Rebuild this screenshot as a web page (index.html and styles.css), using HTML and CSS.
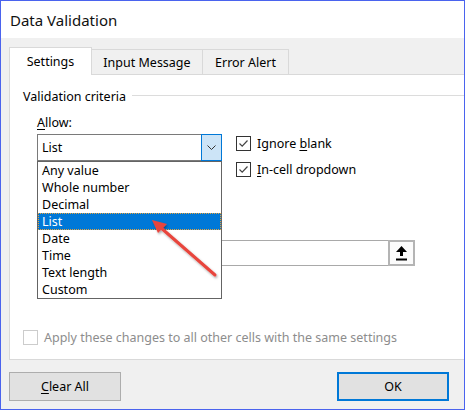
FILE: index.html
```html
<!DOCTYPE html>
<html>
<head>
<meta charset="utf-8">
<link rel="stylesheet" href="styles.css">
</head>
<body>
<div class="dialog">
  <div class="titlebar">Data Validation</div>
  <div class="main">
    <div class="tabs">
      <div class="tab active">Settings</div>
      <div class="tab tab-input">Input Message</div>
      <div class="tab tab-error">Error Alert</div>
    </div>
    <div class="panel">
      <div class="legend"><span>Validation criteria</span><span class="legend-line"></span></div>
      <div class="criteria">
        <div class="col-left">
          <div class="label"><u>A</u>llow:</div>
          <div class="combo-wrap">
            <div class="combo">
              <span class="combo-text">List</span>
              <span class="combo-btn">
                <svg width="9" height="6" viewBox="0 0 9 6"><polyline points="0.5,0.5 4.5,4.5 8.5,0.5" fill="none" stroke="#333" stroke-width="1"/></svg>
              </span>
            </div>
            <ul class="dropdown">
              <li>Any value</li>
              <li>Whole number</li>
              <li>Decimal</li>
              <li class="selected">List</li>
              <li>Date</li>
              <li>Time</li>
              <li>Text length</li>
              <li>Custom</li>
            </ul>
          </div>
        </div>
        <div class="col-right">
          <div class="check-row">
            <span class="box"><svg width="13" height="13" viewBox="0 0 13 13"><polyline points="2.5,6.5 5.2,9.2 10.5,3.5" fill="none" stroke="#444" stroke-width="1.2"/></svg></span>
            <span>Ignore <u>b</u>lank</span>
          </div>
          <div class="check-row">
            <span class="box"><svg width="13" height="13" viewBox="0 0 13 13"><polyline points="2.5,6.5 5.2,9.2 10.5,3.5" fill="none" stroke="#444" stroke-width="1.2"/></svg></span>
            <span><u>I</u>n-cell dropdown</span>
          </div>
        </div>
      </div>
      <div class="source-row">
        <div class="source-input"></div>
        <div class="source-btn">
          <svg width="11" height="15" viewBox="0 0 11 15"><polygon points="5.5,0 11,6 7,6 7,10 4,10 4,6 0,6" fill="#000"/><rect x="0" y="12.5" width="11" height="2" fill="#000"/></svg>
        </div>
      </div>
      <div class="apply-row">
        <span class="box disabled"></span>
        <span>Apply these changes to all other cells with the same settings</span>
      </div>
    </div>
    <div class="buttons">
      <div class="btn"><u>C</u>lear All</div>
      <div class="btn btn-ok">OK</div>
    </div>
  </div>
  <svg class="arrow" width="465" height="410" viewBox="0 0 465 410">
    <defs>
      <filter id="sh" x="-20%" y="-20%" width="140%" height="140%">
        <feDropShadow dx="1" dy="1.5" stdDeviation="1.2" flood-color="#000" flood-opacity="0.35"/>
      </filter>
    </defs>
    <g filter="url(#sh)">
      <line x1="215" y1="275" x2="160" y2="227" stroke="#e8453c" stroke-width="3" stroke-linecap="round"/>
      <polygon points="152,220 167,224 158,233" fill="#e8453c"/>
    </g>
  </svg>
</div>
</body>
</html>
```
FILE: styles.css
```css
* { box-sizing: border-box; }
html, body { margin: 0; padding: 0; background: #fff; }
body {
  font-family: "Noto Sans", "Open Sans", sans-serif;
  font-size: 12.5px;
  color: #000;
}
u { text-decoration: underline; text-underline-offset: 2px; }
.dialog {
  position: relative;
  width: 465px;
  height: 410px;
  border: 1px solid #4a63ee;
  display: flex;
  flex-direction: column;
  overflow: hidden;
}
.titlebar {
  height: 37px;
  background: #fff;
  padding-left: 9px;
  display: flex;
  align-items: center;
  font-size: 15px;
  color: #111;
}
.main {
  flex: 1;
  background: #f0f0f0;
  padding: 9px 0 0 8px;
  display: flex;
  flex-direction: column;
}
.tabs {
  display: flex;
  align-items: flex-end;
  height: 27px;
}
.tab {
  height: 25px;
  display: flex;
  align-items: center;
  justify-content: center;
  border: 1px solid #d9d9d9;
  border-bottom: none;
  background: #f0f0f0;
}
.tab.active {
  position: relative;
  z-index: 1;
  width: 83px;
  height: 28px;
  margin-bottom: -1px;
  background: #fff;
}
.tab-input { width: 111px; border-left: none; }
.tab-error { width: 86px; border-left: none; }
.panel {
  height: 286px;
  background: #fff;
  border: 1px solid #d9d9d9;
  border-right: none;
  padding: 14px 0 14px 13px;
  display: flex;
  flex-direction: column;
}
.legend {
  display: flex;
  align-items: flex-start;
  height: 16px;
  line-height: 16px;
  gap: 6px;
}
.legend-line {
  flex: 1;
  margin-top: 6px;
  border-top: 1px solid #dcdcdc;
}
.criteria {
  display: flex;
  gap: 14px;
  margin-left: 14px;
  margin-top: 10px;
  height: 62px;
}
.col-left { width: 185px; }
.label { height: 16px; line-height: 16px; }
.combo-wrap {
  position: relative;
  margin-top: 3px;
}
.combo {
  height: 27px;
  border: 1px solid #7a7a7a;
  display: flex;
  align-items: stretch;
}
.combo-text {
  flex: 1;
  padding-left: 4px;
  display: flex;
  align-items: center;
}
.combo-btn {
  width: 21px;
  margin: -1px -1px -1px 0;
  background: #cce4f7;
  border: 1px solid #0078d7;
  display: flex;
  align-items: center;
  justify-content: center;
}
.dropdown {
  position: absolute;
  top: 100%;
  left: 0;
  width: 185px;
  margin: 0;
  padding: 0;
  list-style: none;
  background: #fff;
  border: 1px solid #646464;
  z-index: 5;
}
.dropdown li {
  height: 17px;
  line-height: 17px;
  padding-left: 4px;
}
.dropdown li.selected {
  background: #0078d7;
  color: #fff;
  outline: 1px dotted #e8a33c;
  outline-offset: -1px;
}
.col-right {
  padding-top: 21px;
  display: flex;
  flex-direction: column;
  gap: 11px;
}
.check-row, .apply-row {
  display: flex;
  align-items: center;
  gap: 6px;
  height: 15px;
}
.box {
  width: 15px;
  height: 15px;
  border: 1px solid #333;
  background: #fff;
  display: flex;
  align-items: center;
  justify-content: center;
}
.box.disabled { border-color: #cccccc; }
.source-row {
  display: flex;
  margin-left: 14px;
  margin-top: 63px;
  height: 26px;
}
.source-input {
  width: 351px;
  border: 1px solid #a9a9a9;
  border-right: none;
}
.source-btn {
  width: 27px;
  border: 2px solid #b4b4b4;
  background: #fbfbfb;
  display: flex;
  align-items: center;
  justify-content: center;
}
.apply-row {
  margin-top: auto;
  color: #8d8d8d;
}
.buttons {
  display: flex;
  justify-content: space-between;
  padding-right: 15px;
  margin-top: 12px;
}
.btn {
  width: 112px;
  height: 29px;
  background: #e1e1e1;
  border: 1px solid #adadad;
  display: flex;
  align-items: center;
  justify-content: center;
}
.btn-ok { border: 2px solid #0078d7; }
.arrow {
  position: absolute;
  left: -1px;
  top: -1px;
  pointer-events: none;
  z-index: 10;
}
```
